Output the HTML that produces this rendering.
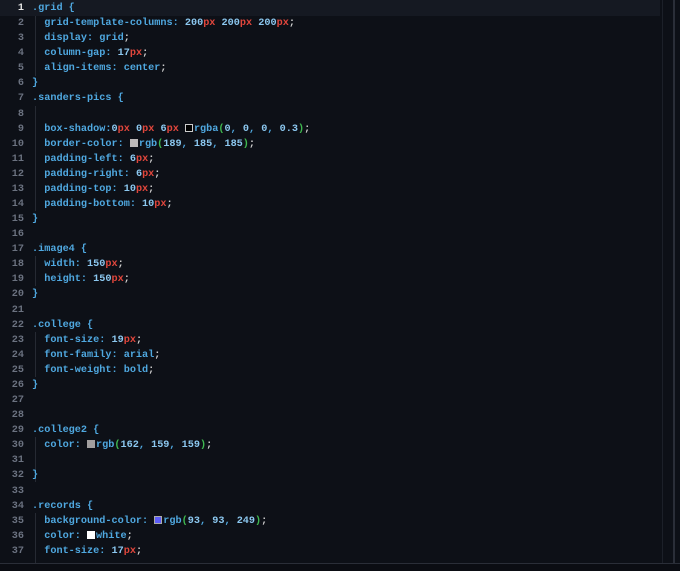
<!DOCTYPE html>
<html><head><style>
html,body{margin:0;padding:0;background:#0d1017;width:680px;height:570px;overflow:hidden}
.ed{position:absolute;left:0;top:0;width:680px;height:563px;background:#0d1017}
.hl{position:absolute;left:0;top:0;width:660px;height:16px;background:#151922}
.bot{position:absolute;left:0;top:563px;width:680px;height:7px;background:#0b0d13;border-top:1px solid #2a2e38}
.sb1{position:absolute;left:662px;top:0;width:1px;height:563px;background:#1c2029}
.sb2{position:absolute;left:673px;top:0;width:2px;height:563px;background:#2a2e38}
.guide{position:absolute;left:35px;width:1px;background:#262a33}
pre{margin:0;position:absolute;top:1px;font-family:"Liberation Mono",monospace;font-size:10.2px;line-height:15.08px;font-weight:bold}
.ln{left:0;width:24px;text-align:right;color:#6b7280}
.ln b{color:#e6e6e6}
.code{left:32px;color:#4fa8e0}
.n{color:#8cc8f0}.r{color:#e0463c}.g{color:#3fb950}.w{color:#d0d0d0}
.sw{display:inline-block;width:8px;height:8px;border:1px solid #ccc;vertical-align:-1px;margin-right:1px;box-sizing:border-box}
</style></head><body>
<div class="ed"></div><div class="hl"></div>
<div class="guide" style="top:16px;height:60px"></div>
<div class="guide" style="top:106px;height:105px"></div>
<div class="guide" style="top:256px;height:30px"></div>
<div class="guide" style="top:332px;height:45px"></div>
<div class="guide" style="top:437px;height:45px"></div>
<div class="guide" style="top:513px;height:50px"></div>
<div class="sb1"></div><div class="sb2"></div>
<pre class="ln"><b>1</b>
2
3
4
5
6
7
8
9
10
11
12
13
14
15
16
17
18
19
20
21
22
23
24
25
26
27
28
29
30
31
32
33
34
35
36
37</pre>
<pre class="code">.grid {
  grid-template-columns: <span class="n">200</span><span class="r">px</span> <span class="n">200</span><span class="r">px</span> <span class="n">200</span><span class="r">px</span><span class="w">;</span>
  display: grid<span class="w">;</span>
  column-gap: <span class="n">17</span><span class="r">px</span><span class="w">;</span>
  align-items: center<span class="w">;</span>
}
.sanders-pics {

  box-shadow:<span class="n">0</span><span class="r">px</span> <span class="n">0</span><span class="r">px</span> <span class="n">6</span><span class="r">px</span> <span class="sw" style="background:#000"></span>rgba<span class="g">(</span><span class="n">0</span>, <span class="n">0</span>, <span class="n">0</span>, <span class="n">0.3</span><span class="g">)</span><span class="w">;</span>
  border-color: <span class="sw" style="background:#bdb9b9;border-color:#bdb9b9"></span>rgb<span class="g">(</span><span class="n">189</span>, <span class="n">185</span>, <span class="n">185</span><span class="g">)</span><span class="w">;</span>
  padding-left: <span class="n">6</span><span class="r">px</span><span class="w">;</span>
  padding-right: <span class="n">6</span><span class="r">px</span><span class="w">;</span>
  padding-top: <span class="n">10</span><span class="r">px</span><span class="w">;</span>
  padding-bottom: <span class="n">10</span><span class="r">px</span><span class="w">;</span>
}

.image4 {
  width: <span class="n">150</span><span class="r">px</span><span class="w">;</span>
  height: <span class="n">150</span><span class="r">px</span><span class="w">;</span>
}

.college {
  font-size: <span class="n">19</span><span class="r">px</span><span class="w">;</span>
  font-family: arial<span class="w">;</span>
  font-weight: bold<span class="w">;</span>
}


.college2 {
  color: <span class="sw" style="background:#a29f9f;border-color:#a29f9f"></span>rgb<span class="g">(</span><span class="n">162</span>, <span class="n">159</span>, <span class="n">159</span><span class="g">)</span><span class="w">;</span>

}

.records {
  background-color: <span class="sw" style="background:#5d5df9;border-color:#aaa"></span>rgb<span class="g">(</span><span class="n">93</span>, <span class="n">93</span>, <span class="n">249</span><span class="g">)</span><span class="w">;</span>
  color: <span class="sw" style="background:#fff;border-color:#fff"></span>white<span class="w">;</span>
  font-size: <span class="n">17</span><span class="r">px</span><span class="w">;</span></pre>
<div class="bot"></div>
</body></html>
